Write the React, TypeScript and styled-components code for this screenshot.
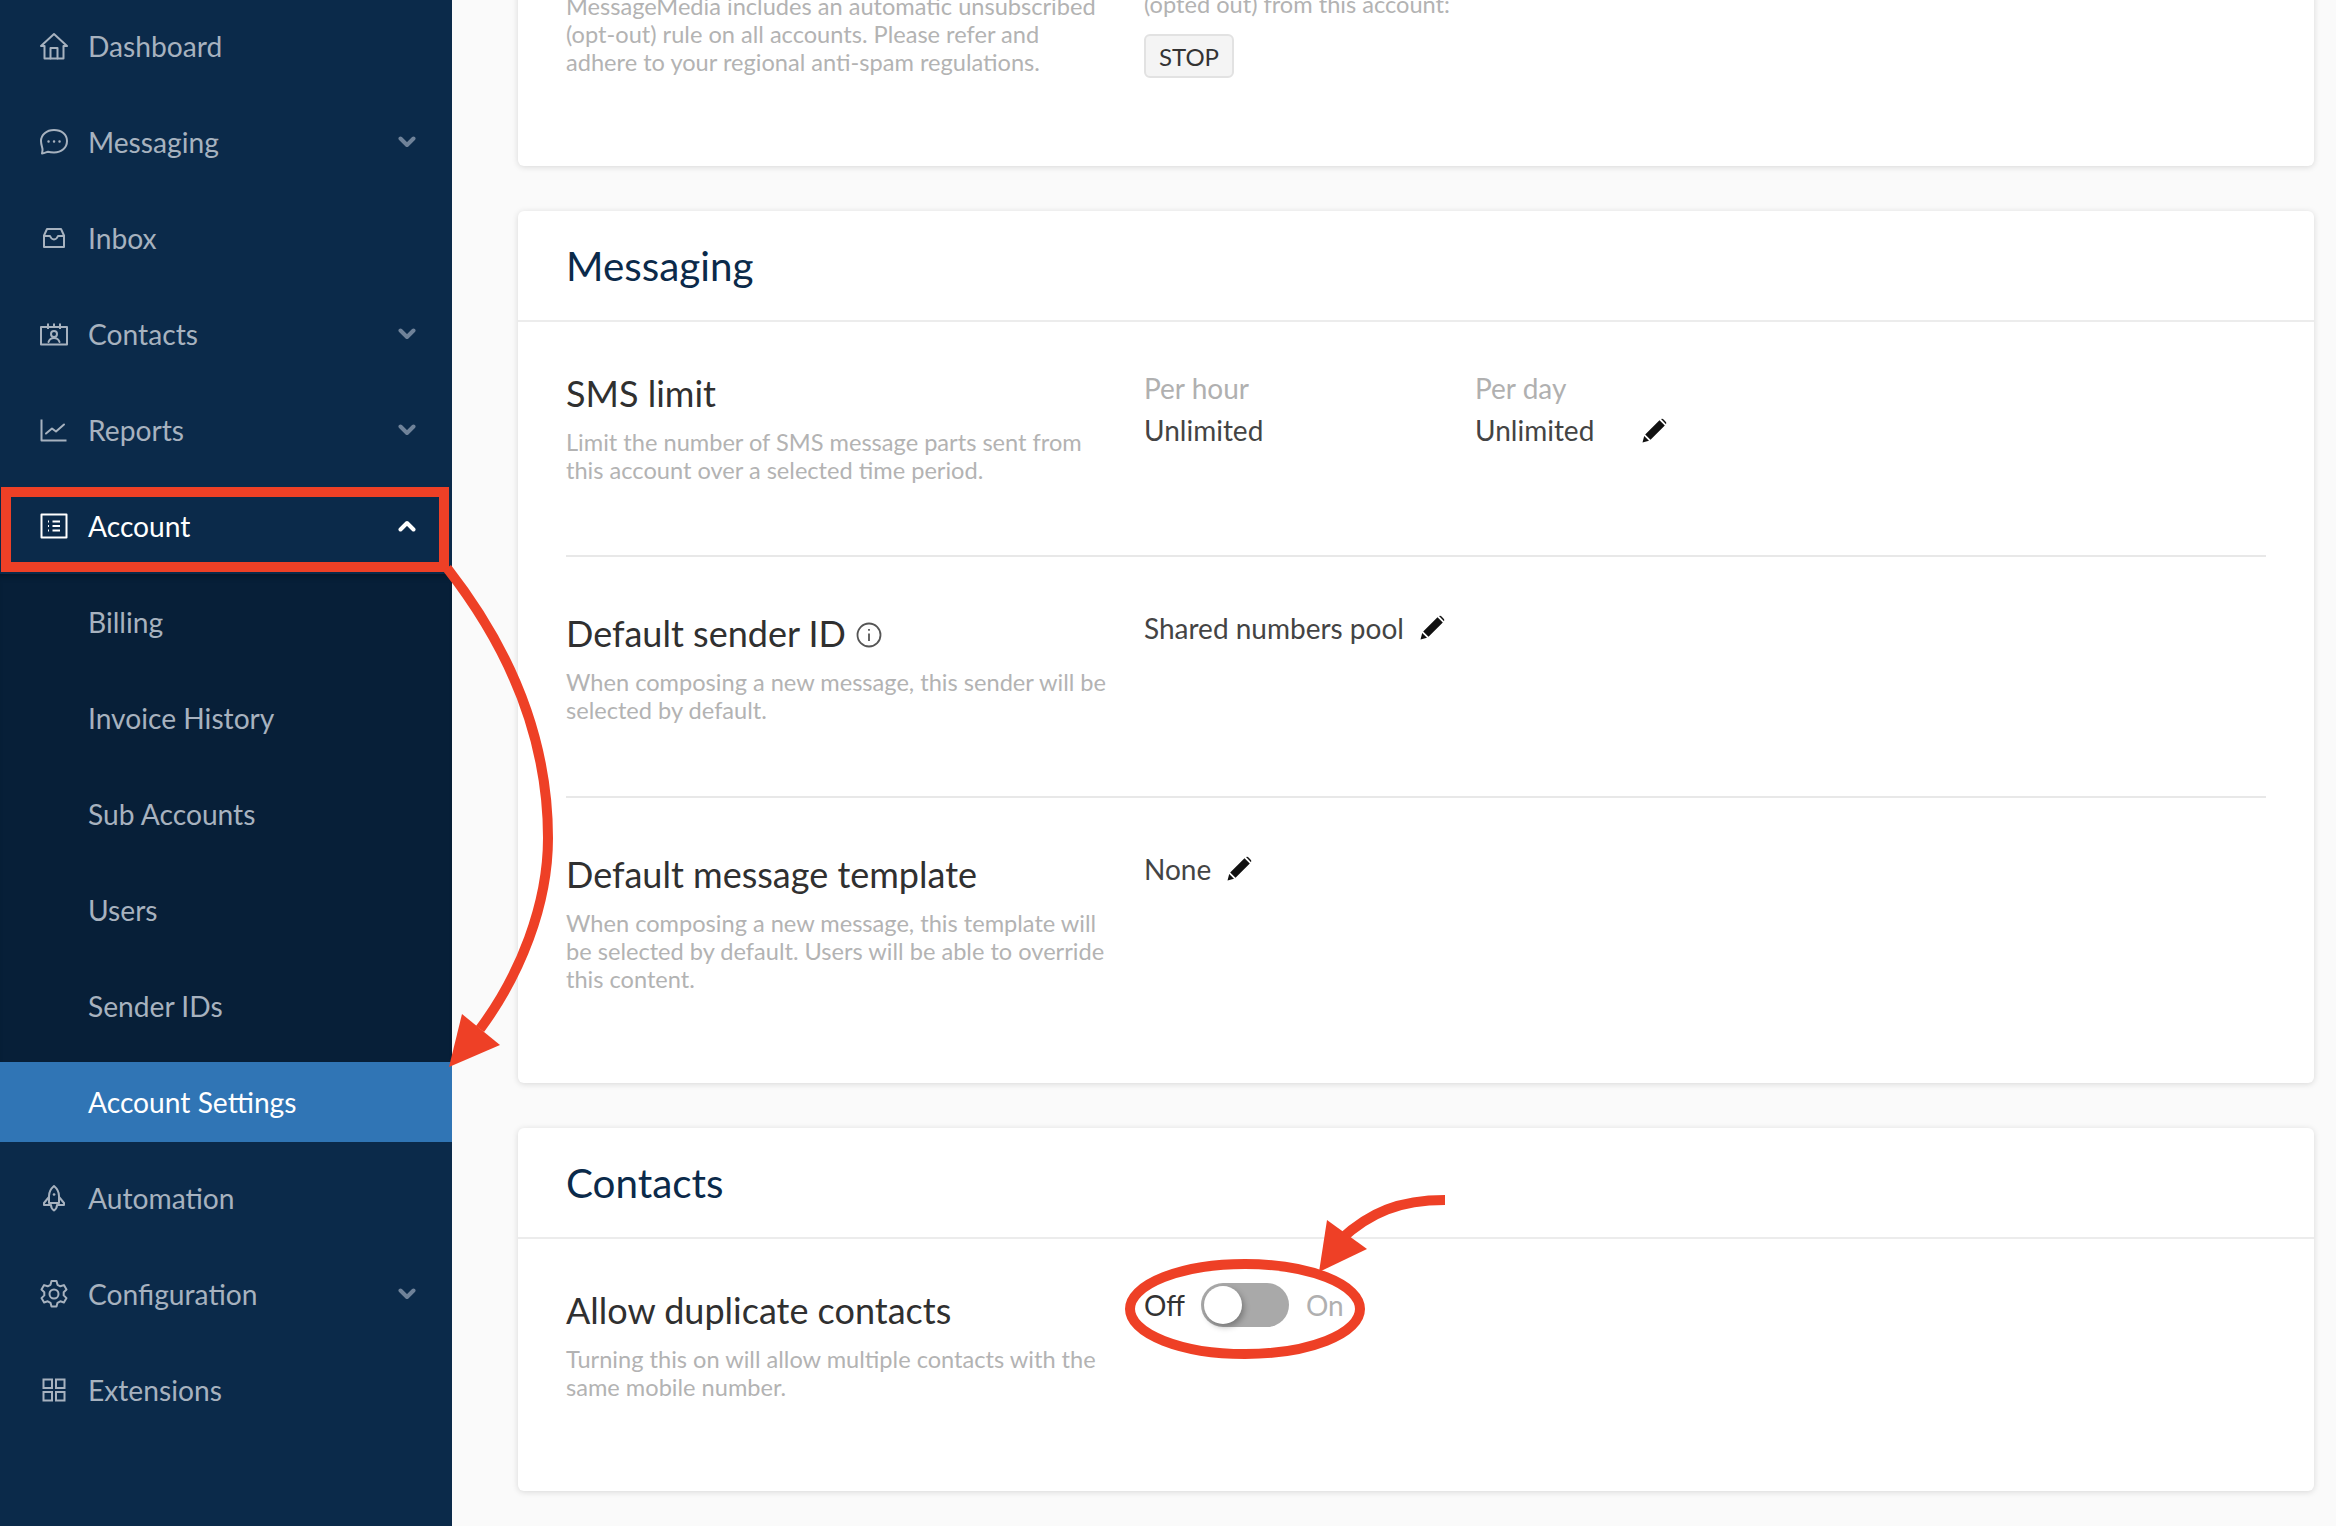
import styled, { createGlobalStyle } from "styled-components";
import type { ReactNode } from "react";

const GlobalStyle = createGlobalStyle`
  html, body {
    margin: 0;
    padding: 0;
    height: 100%;
    overflow: hidden;
    background: #fafafa;
    font-family: Lato, "Liberation Sans", sans-serif;
  }
  * {
    box-sizing: border-box;
  }
`;

const Page = styled.div`
  position: relative;
  display: flex;
  width: 2336px;
  height: 1526px;
  overflow: hidden;
`;

const Sidebar = styled.nav`
  flex: 0 0 452px;
  height: 100%;
  background: #0b2a4a;
`;

const NavList = styled.div`
  margin-top: -2px;
`;

const NavRow = styled.div<{ $active?: boolean }>`
  display: flex;
  align-items: center;
  height: 96px;
  padding: 0 39px 1px;
  font-size: 28.2px;
  color: ${(p) => (p.$active ? "#ffffff" : "#a7b2bf")};
`;

const NavIcon = styled.span<{ $active?: boolean }>`
  flex: 0 0 30px;
  display: flex;
  justify-content: center;
  margin-right: 19px;
  color: ${(p) => (p.$active ? "#ffffff" : "#a7b2bf")};
`;

const NavLabel = styled.span`
  flex: 1;
`;

const Chevron = styled.svg<{ $active?: boolean }>`
  width: 18px;
  height: 12px;
  fill: none;
  stroke: ${(p) => (p.$active ? "#ffffff" : "#6f8299")};
  stroke-width: 4;
  stroke-linecap: round;
  stroke-linejoin: round;
  margin-right: -3px;
`;

const SubMenu = styled.div`
  background: #071f38;
  box-shadow: inset 0 6px 6px -4px rgba(0, 0, 0, 0.3);
`;

const SubRow = styled.div`
  display: flex;
  align-items: center;
  height: 96px;
  padding: 0 0 1px 88px;
  font-size: 28.2px;
  color: #a7b2bf;
`;

const SubRowActive = styled.div`
  display: flex;
  align-items: center;
  height: 80px;
  margin: 8px 0;
  padding: 0 0 1px 88px;
  font-size: 28.2px;
  color: #ffffff;
  background: #3075b5;
`;

const Main = styled.main`
  flex: 1;
  padding: 0 22px 0 66px;
  min-width: 0;
`;

const Card = styled.section`
  background: #ffffff;
  border-radius: 6px;
  box-shadow: 0 1px 6px rgba(0, 0, 0, 0.14);
  margin-bottom: 45px;
`;

const ClippedCard = styled(Card)`
  position: relative;
  margin-top: -40px;
  height: 206px;
  padding: 32px 48px 0;
  display: grid;
  grid-template-columns: 578px 1fr;
`;

const CardHeader = styled.header`
  height: 111px;
  padding: 0 48px;
  display: flex;
  align-items: center;
  border-bottom: 2px solid #ececec;
  font-size: 40.4px;
  color: #0b2a4a;
`;

const CardBody = styled.div`
  padding: 0 48px;
`;

const Row = styled.div`
  display: grid;
  grid-template-columns: 578px 1fr;
  padding: 54px 0 72px;
  border-bottom: 2px solid #e8e8e8;
  &:first-child {
    padding-top: 49px;
    padding-bottom: 71px;
  }
  &:last-child {
    padding-bottom: 90px;
    border-bottom: none;
  }
`;

const RowTitle = styled.div`
  display: flex;
  align-items: center;
  gap: 10px;
  height: 44px;
  font-size: 36px;
  color: #303030;
  margin-bottom: 13px;
`;

const Description = styled.p`
  margin: 0;
  width: 548px;
  font-size: 23.6px;
  line-height: 28px;
  color: #b3b3b3;
`;

const RightNote = styled.div`
  font-size: 23.6px;
  line-height: 28px;
  color: #b3b3b3;
  margin-top: -2px;
`;

const StopTag = styled.span`
  display: inline-flex;
  align-items: center;
  justify-content: center;
  width: 90px;
  height: 44px;
  margin-top: 16px;
  border: 2px solid #e2e2e2;
  border-radius: 6px;
  background: #f4f4f4;
  font-size: 24px;
  color: #333333;
`;

const Values = styled.div`
  display: flex;
  align-items: flex-start;
`;

const Field = styled.div`
  width: 331px;
  &:last-of-type {
    width: auto;
  }
`;

const FieldLabel = styled.div`
  font-size: 28px;
  line-height: 34px;
  color: #b0b0b0;
  margin-bottom: 8px;
`;

const Value = styled.div`
  font-size: 28px;
  line-height: 34px;
  color: #444444;
`;

const EditIcon = styled.svg<{ $gap: number; $top?: number }>`
  flex: none;
  width: 26px;
  height: 26px;
  margin-left: ${(p) => p.$gap}px;
  margin-top: ${(p) => p.$top ?? 4}px;
`;

const CutOffEdit = styled.span`
  position: absolute;
  left: 1399px;
  top: 15px;
`;

const ToggleRow = styled.div`
  display: flex;
  align-items: center;
  height: 34px;
  font-size: 28px;
`;

const ToggleText = styled.span<{ $on?: boolean }>`
  color: ${(p) => (p.$on ? "#b0b0b0" : "#333333")};
`;

const Track = styled.div`
  position: relative;
  width: 88px;
  height: 44px;
  margin: 0 17px 0 16px;
  border-radius: 22px;
  background: #a9a9a9;
`;

const Knob = styled.div`
  position: absolute;
  left: 3px;
  top: 3px;
  width: 38px;
  height: 38px;
  border-radius: 50%;
  background: #ffffff;
  box-shadow: 2px 3px 6px rgba(0, 0, 0, 0.3);
`;

const Annotations = styled.svg`
  position: absolute;
  left: 0;
  top: 0;
  width: 2336px;
  height: 1526px;
  pointer-events: none;
`;

const line = {
  fill: "none",
  stroke: "currentColor",
  strokeWidth: 2,
  strokeLinecap: "round" as const,
  strokeLinejoin: "round" as const,
};

const Svg = ({ w, h = w, children }: { w: number; h?: number; children: ReactNode }) => (
  <svg width={w} height={h} viewBox={`0 0 ${w} ${h}`} {...line}>
    {children}
  </svg>
);

const HomeIcon = () => (
  <Svg w={30} h={28}>
    <path d="M2 14 15 2l13 12h-3.5v12.5h-19V14Z" />
    <path d="M11.5 26.5V16h7v10.5" />
  </Svg>
);
const ChatIcon = () => (
  <Svg w={30} h={28}>
    <path d="M15 2C7.5 2 2 6.8 2 13c0 3 1 5.600 1.500 8 .2 2-.5 4-.5 4.500 3-.5 4.500-1.500 6-1.700 1.700.5 3.500.7 6 .7 7.500 0 13-4.800 13-11.500S22.500 2 15 2Z" />
    <path d="M9.500 13.500h.1M15 13.500h.1M20.500 13.500h.1" strokeWidth={2.4} />
  </Svg>
);
const InboxIcon = () => (
  <Svg w={24} h={22}>
    <path d="M5 2h14l3 6.500V20H2V8.500L5 2Z" />
    <path d="M2 9h6c1 2.500 2.300 3.500 4 3.500S15 11.500 16 9h6" />
  </Svg>
);
const ContactsIcon = () => (
  <Svg w={30} h={24}>
    <path d="M2 5h26v17.500H2z" strokeLinecap="butt" />
    <path d="M9 1.500V7M15 1.500V5M21 1.500V7" strokeLinecap="butt" />
    <circle cx={15} cy={12} r={3} />
    <path d="M9.500 20c1-3 3-4 5.500-4s4.500 1 5.500 4" />
  </Svg>
);
const ChartIcon = () => (
  <Svg w={28} h={24}>
    <path d="M1.500 1.500v21h25" strokeLinecap="butt" />
    <path d="M6 15.500l6-5 4 3 8-7" />
  </Svg>
);
const AccountIcon = () => (
  <Svg w={28} h={26}>
    <rect x={1.500} y={1.500} width={25} height={23} />
    <path d="M8 8.500h1M8 13h1M8 17.500h1M12.500 8.500H20M12.500 13H20M12.500 17.500H20" strokeLinecap="butt" />
  </Svg>
);
const RocketIcon = () => (
  <Svg w={24} h={28}>
    <path d="M12 2c3.500 3 5 6.500 5 10v7H7v-7c0-3.500 1.500-7 5-10Z" />
    <path d="M7 13l-5 6v2h6M17 13l5 6v2h-6M9 21c0 3 1.500 4.500 3 5.500 1.500-1 3-2.500 3-5.500" />
    <path d="M12 10.500h.1" strokeWidth={2.600} />
  </Svg>
);
const GearIcon = () => (
  <Svg w={28} h={30}>
    <path d="M11.500 2h5l1 3.800 2.800 1.500 3.600-1.200 2.600 4.400-2.800 2.700v3.200l2.800 2.700-2.600 4.400-3.600-1.200-2.800 1.500-1 3.800h-5l-1-3.800-2.800-1.500-3.600 1.200-2.600-4.400 2.800-2.700v-3.200L1.500 10.500l2.600-4.400 3.600 1.200 2.800-1.500 1-3.800Z" />
    <circle cx={14} cy={15} r={4.500} />
  </Svg>
);
const GridIcon = () => (
  <Svg w={24} h={24}>
    <rect x={1.500} y={1.500} width={8.500} height={8.500} strokeLinejoin="miter" />
    <rect x={14} y={1.500} width={8.500} height={8.500} strokeLinejoin="miter" />
    <rect x={1.500} y={14} width={8.500} height={8.500} strokeLinejoin="miter" />
    <rect x={14} y={14} width={8.500} height={8.500} strokeLinejoin="miter" />
  </Svg>
);

const Pencil = ({ gap, top }: { gap: number; top?: number }) => (
  <EditIcon $gap={gap} $top={top} viewBox="0 0 26 26">
    <path d="M18.500 2.200 23.800 7.500 9.500 21.800 4.200 16.500Z M20 1l1.300-.3c.6 0 4 3.400 4 4L25 6.300Z M3.200 18 8 22.800 1.500 24.500Z" fill="#111" />
  </EditIcon>
);

const InfoIcon = () => (
  <svg width={26} height={26} viewBox="0 0 26 26" fill="none" stroke="#555" strokeWidth={1.800} style={{ marginTop: 4 }}>
    <circle cx={13} cy={13} r={11.500} />
    <path d="M13 11.500V19M13 7v1.800" />
  </svg>
);

const Down = () => (
  <Chevron viewBox="0 0 18 12">
    <path d="M2.500 2.500 9 9l6.500-6.500" />
  </Chevron>
);
const Up = () => (
  <Chevron $active viewBox="0 0 18 12">
    <path d="M2.500 9.500 9 3l6.500 6.500" />
  </Chevron>
);

const mainItems = [
  { label: "Dashboard", icon: <HomeIcon /> },
  { label: "Messaging", icon: <ChatIcon />, more: true },
  { label: "Inbox", icon: <InboxIcon /> },
  { label: "Contacts", icon: <ContactsIcon />, more: true },
  { label: "Reports", icon: <ChartIcon />, more: true },
];

const subItems = ["Billing", "Invoice History", "Sub Accounts", "Users", "Sender IDs"];

const lowerItems = [
  { label: "Automation", icon: <RocketIcon /> },
  { label: "Configuration", icon: <GearIcon />, more: true },
  { label: "Extensions", icon: <GridIcon /> },
];

export default function App() {
  return (
    <>
      <GlobalStyle />
      <Page>
        <Sidebar>
          <NavList>
            {mainItems.map((item) => (
              <NavRow key={item.label}>
                <NavIcon>{item.icon}</NavIcon>
                <NavLabel>{item.label}</NavLabel>
                {item.more && <Down />}
              </NavRow>
            ))}
            <NavRow $active>
              <NavIcon $active>
                <AccountIcon />
              </NavIcon>
              <NavLabel>Account</NavLabel>
              <Up />
            </NavRow>
            <SubMenu>
              {subItems.map((label) => (
                <SubRow key={label}>{label}</SubRow>
              ))}
              <SubRowActive>Account Settings</SubRowActive>
            </SubMenu>
            {lowerItems.map((item) => (
              <NavRow key={item.label}>
                <NavIcon>{item.icon}</NavIcon>
                <NavLabel>{item.label}</NavLabel>
                {item.more && <Down />}
              </NavRow>
            ))}
          </NavList>
        </Sidebar>

        <Main>
          <ClippedCard>
            <Description>
              MessageMedia includes an automatic unsubscribed (opt-out) rule on all accounts. Please refer and adhere
              to your regional anti-spam regulations.
            </Description>
            <div>
              <RightNote>(opted out) from this account:</RightNote>
              <StopTag>STOP</StopTag>
            </div>
            <CutOffEdit>
              <Pencil gap={0} top={0} />
            </CutOffEdit>
          </ClippedCard>

          <Card>
            <CardHeader>Messaging</CardHeader>
            <CardBody>
              <Row>
                <div>
                  <RowTitle>SMS limit</RowTitle>
                  <Description>
                    Limit the number of SMS message parts sent from this account over a selected time period.
                  </Description>
                </div>
                <Values>
                  <Field>
                    <FieldLabel>Per hour</FieldLabel>
                    <Value>Unlimited</Value>
                  </Field>
                  <Field>
                    <FieldLabel>Per day</FieldLabel>
                    <Value>Unlimited</Value>
                  </Field>
                  <Pencil gap={47} top={47} />
                </Values>
              </Row>
              <Row>
                <div>
                  <RowTitle>
                    Default sender ID <InfoIcon />
                  </RowTitle>
                  <Description>
                    When composing a new message, this sender will be selected by default.
                  </Description>
                </div>
                <Values>
                  <Value>Shared numbers pool</Value>
                  <Pencil gap={15} />
                </Values>
              </Row>
              <Row>
                <div>
                  <RowTitle>Default message template</RowTitle>
                  <Description>
                    When composing a new message, this template will be selected by default. Users will be able to
                    override this content.
                  </Description>
                </div>
                <Values>
                  <Value>None</Value>
                  <Pencil gap={15} />
                </Values>
              </Row>
            </CardBody>
          </Card>

          <Card>
            <CardHeader>Contacts</CardHeader>
            <CardBody>
              <Row>
                <div>
                  <RowTitle>Allow duplicate contacts</RowTitle>
                  <Description>
                    Turning this on will allow multiple contacts with the same mobile number.
                  </Description>
                </div>
                <ToggleRow>
                  <ToggleText>Off</ToggleText>
                  <Track>
                    <Knob />
                  </Track>
                  <ToggleText $on>On</ToggleText>
                </ToggleRow>
              </Row>
            </CardBody>
          </Card>
        </Main>

        <Annotations viewBox="0 0 2336 1526" fill="none" stroke="#ee4026">
          <rect x={6} y={492} width={438} height={75} strokeWidth={10} />
          <path d="M447 568C515 655 548 745 548 838C548 905 520 975 480 1029" strokeWidth={10} />
          <path d="M449 1067 462 1014 500 1045Z" fill="#ee4026" stroke="none" />
          <ellipse cx={1245} cy={1309} rx={115} ry={45} strokeWidth={10} />
          <path d="M1445 1200C1400 1200 1370 1212 1340 1240" strokeWidth={10} />
          <path d="M1319 1272 1327 1220 1367 1249Z" fill="#ee4026" stroke="none" />
        </Annotations>
      </Page>
    </>
  );
}
